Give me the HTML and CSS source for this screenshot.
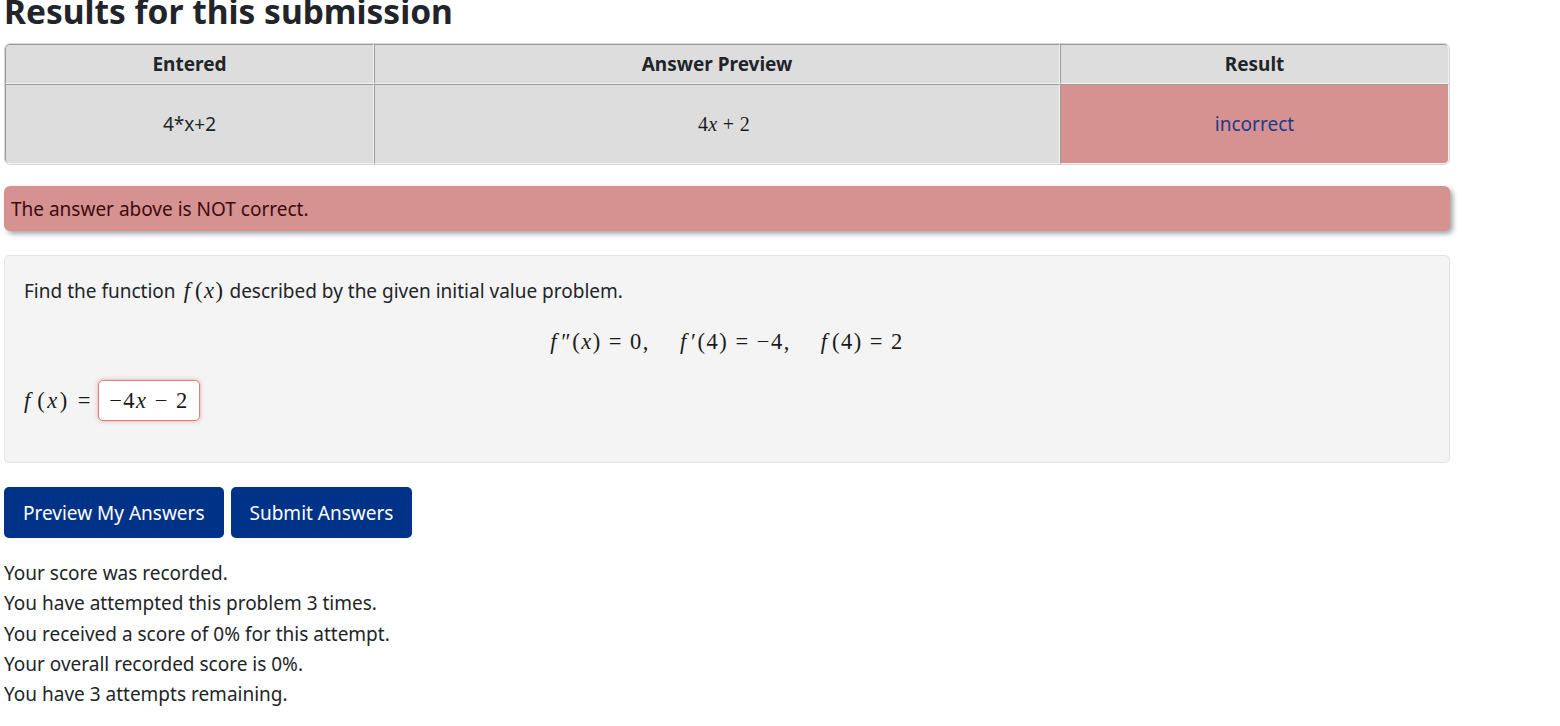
FILE: index.html
```html
<!DOCTYPE html>
<html>
<head>
<meta charset="utf-8">
<link rel="stylesheet" href="styles.css">
</head>
<body>
<div class="page">
  <h2 class="title">Results for this submission</h2>
  <div class="results-wrap">
    <table class="results">
      <colgroup><col class="c1"><col class="c2"><col class="c3"></colgroup>
      <thead>
        <tr><th class="tl">Entered</th><th>Answer Preview</th><th class="tr">Result</th></tr>
      </thead>
      <tbody>
        <tr>
          <td class="bl">4*x+2</td>
          <td><span class="m mp">4<i>x</i> + 2</span></td>
          <td class="result br"><span class="res-text">incorrect</span></td>
        </tr>
      </tbody>
    </table>
  </div>
  <div class="alert">The answer above is NOT correct.</div>
  <div class="problem">
    <p class="ptext">Find the function <span class="m">&#8202;<i>f</i>&#8202;(<i>x</i>)</span> described by the given initial value problem.</p>
    <div class="display"><span class="m"><i>f</i>&#8202;&#8243;(<i>x</i>) = 0,</span><span class="m sp"><i>f</i>&#8202;&#8242;(4) = &#8722;4,</span><span class="m sp"><i>f</i>&#8202;(4) = 2</span></div>
    <div class="answer-row"><span class="m lhs"><i>f</i>&#8202;(<i>x</i>) =</span><span class="answer-box"><span class="m">&#8722;4<i>x</i> &#8722; 2</span></span></div>
  </div>
  <div class="buttons">
    <button class="btn">Preview My Answers</button>
    <button class="btn">Submit Answers</button>
  </div>
  <div class="score">
    <div>Your score was recorded.</div>
    <div>You have attempted this problem 3 times.</div>
    <div>You received a score of 0% for this attempt.</div>
    <div>Your overall recorded score is 0%.</div>
    <div>You have 3 attempts remaining.</div>
  </div>
</div>
</body>
</html>
```
FILE: styles.css
```css
html, body { margin: 0; padding: 0; background: #fff; }
body {
  font-family: "Noto Sans", "Open Sans", sans-serif;
  color: #212529;
  font-size: 19px;
  overflow: hidden;
}
.page { width: 1446px; padding: 0 4px; }
.title {
  font-size: 33.5px;
  font-weight: 700;
  margin: -12px 0 0 0;
  line-height: 46px;
  height: 55px;
  color: #212529;
}
.results-wrap {
  border: 1px solid #d6d6d6;
  border-radius: 6px;
  width: 1444px;
  overflow: hidden;
}
.results {
  width: 100%;
  border-collapse: separate;
  border-spacing: 0;
  table-layout: fixed;
}
.c1 { width: 369px; }
.c2 { width: 686px; }
.c3 { width: auto; }
.results th, .results td {
  background: #dddddd;
  text-align: center;
  border-top: 1px solid #9a9a9a;
  border-left: 1px solid #9a9a9a;
  border-right: 1px solid #f2f2f2;
  border-bottom: 1px solid #f2f2f2;
  padding: 0;
}
.results th {
  height: 38px;
  font-weight: 700;
  font-size: 19px;
}
.results td { height: 78px; font-size: 19px; }
.results .tl { border-top-left-radius: 5px; }
.results .tr { border-top-right-radius: 5px; }
.results .bl { border-bottom-left-radius: 5px; }
.results .br { border-bottom-right-radius: 5px; }
.results td.result { background: #d69191; }
.res-text { color: #1d3a8a; }
.m {
  font-family: "Liberation Serif", "DejaVu Serif", serif;
  font-size: 22.5px;
  letter-spacing: 1.5px;
  color: #1a1a1a;
}
.m i { font-style: italic; }
.mp { font-size: 20px; letter-spacing: 0.3px; margin-left: 14px; }
.lhs { letter-spacing: 2.5px; }
.alert {
  margin-top: 21px;
  height: 45px;
  box-sizing: border-box;
  padding: 0 7px;
  display: flex;
  align-items: center;
  background: #d69191;
  color: #3a0c0c;
  border-radius: 6px;
  box-shadow: 3px 3px 5px rgba(0,0,0,0.35);
  font-size: 19px;
}
.problem {
  margin-top: 24px;
  background: #f4f4f4;
  border: 1px solid #e3e3e3;
  border-radius: 5px;
  box-sizing: border-box;
  height: 208px;
  padding: 20px 19px;
}
.ptext { margin: 0; line-height: 30px; font-size: 19px; }
.display {
  display: flex;
  justify-content: center;
  margin-top: 20px;
  height: 32px;
  align-items: center;
}
.sp { margin-left: 30px; }
.answer-row {
  display: flex;
  align-items: center;
  margin-top: 22px;
  gap: 5px;
}
.answer-box {
  display: inline-flex;
  align-items: center;
  justify-content: center;
  width: 102px;
  height: 41px;
  box-sizing: border-box;
  background: #fff;
  border: 1px solid #d98080;
  border-radius: 5px;
  box-shadow: 0 0 4px rgba(217, 83, 79, 0.5);
}
.buttons { display: flex; gap: 7px; margin-top: 24px; }
.btn {
  font-family: "Noto Sans", "Open Sans", sans-serif;
  background: #003387;
  color: #fff;
  border: none;
  border-radius: 5px;
  height: 51px;
  padding: 0 19px;
  font-size: 19px;
}
.score { margin-top: 20px; line-height: 30.3px; font-size: 19px; }
```
